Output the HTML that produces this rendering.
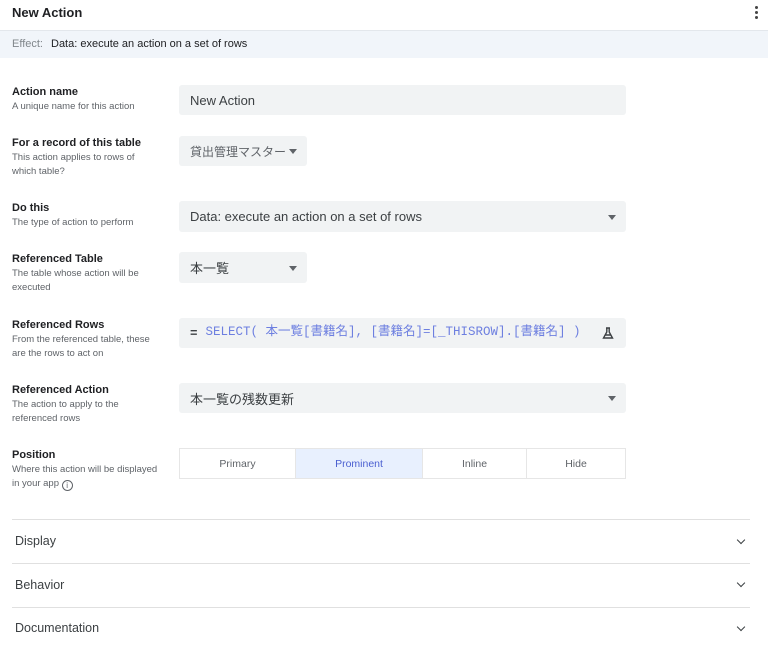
<!DOCTYPE html>
<html><head><meta charset="utf-8"><style>
*{box-sizing:border-box;margin:0;padding:0}
body{width:768px;height:664px;background:#fff;font-family:"Liberation Sans","Noto Sans CJK JP",sans-serif;color:#202124;position:relative;overflow:hidden}
.a{position:absolute}
.lab{position:absolute;left:12px;width:146px}
.t{font-size:11px;font-weight:bold;color:#202124}
.s{font-size:9.5px;color:#5f6368;line-height:14px;margin-top:2px}
.box{position:absolute;background:#f1f3f4;border-radius:3px;font-size:13px;color:#3c4043;padding-left:11px;display:flex;align-items:center;white-space:nowrap}
.dd:after{content:"";position:absolute;right:10px;top:50%;margin-top:-2px;border-left:4px solid transparent;border-right:4px solid transparent;border-top:5px solid #5f6368}
.seg{position:absolute;top:448px;height:31px;border:1px solid #e6e6e6;font-size:10.5px;color:#5f6368;display:flex;align-items:center;justify-content:center}
.hr{position:absolute;left:12px;width:738px;height:1px;background:#e0e0e0}
.sec{position:absolute;left:15px;font-size:12.5px;color:#3c4043}
.chev{position:absolute;left:738px;width:6px;height:6px;border-right:1.5px solid #3c4043;border-bottom:1.5px solid #3c4043;transform:rotate(45deg)}
</style></head><body>
<div class="a" style="left:12px;top:5px;font-size:13px;font-weight:bold">New Action</div>
<div class="a" style="left:755px;top:6px;width:3px;font-size:0">
<div style="width:3px;height:3px;border-radius:50%;background:#444;margin-bottom:2px"></div><div style="width:3px;height:3px;border-radius:50%;background:#444;margin-bottom:2px"></div><div style="width:3px;height:3px;border-radius:50%;background:#444"></div></div>
<div class="a" style="left:0;top:30px;width:768px;height:28px;background:#f1f5fa;border-top:1px solid #e3e7ec"></div>
<div class="a" style="left:12px;top:38px;font-size:11px;color:#80868b">Effect:</div>
<div class="a" style="left:51px;top:38px;font-size:11px;color:#202124">Data: execute an action on a set of rows</div>

<div class="lab" style="top:86px"><div class="t">Action name</div><div class="s">A unique name for this action</div></div>
<div class="box" style="left:179px;top:85px;width:447px;height:30px">New Action</div>

<div class="lab" style="top:137px;width:140px"><div class="t">For a record of this table</div><div class="s">This action applies to rows of which table?</div></div>
<div class="box dd" style="left:179px;top:136px;width:128px;height:30px;color:#5f6368;font-size:12px">貸出管理マスター</div>

<div class="lab" style="top:202px"><div class="t">Do this</div><div class="s">The type of action to perform</div></div>
<div class="box dd" style="left:179px;top:201px;width:447px;height:31px">Data: execute an action on a set of rows</div>

<div class="lab" style="top:253px;width:140px"><div class="t">Referenced Table</div><div class="s">The table whose action will be executed</div></div>
<div class="box dd" style="left:179px;top:252px;width:128px;height:31px">本一覧</div>

<div class="lab" style="top:319px;width:150px"><div class="t">Referenced Rows</div><div class="s">From the referenced table, these are the rows to act on</div></div>
<div class="box" style="left:179px;top:318px;width:447px;height:30px;font-family:'Liberation Mono','Noto Sans CJK JP',monospace;font-size:12.5px;color:#6d7fe0;line-height:16px"><span style="color:#3c4043;margin-right:8px;font-weight:bold;line-height:16px;position:relative;top:1px">=</span><span style="line-height:16px;position:relative;top:-1px">SELECT( 本一覧[書籍名], [書籍名]=[_THISROW].[書籍名] )</span>
<svg class="a" style="left:423px;top:9px" width="12" height="12" viewBox="0 0 12 12"><path d="M4 1h4M4.8 1v4L1.5 11h9L7.2 5V1M3 8h6" fill="none" stroke="#3c4043" stroke-width="1.4"/></svg></div>

<div class="lab" style="top:384px;width:120px"><div class="t">Referenced Action</div><div class="s">The action to apply to the referenced rows</div></div>
<div class="box dd" style="left:179px;top:383px;width:447px;height:30px">本一覧の残数更新</div>

<div class="lab" style="top:449px;width:152px"><div class="t">Position</div><div class="s">Where this action will be displayed in your app <span style="display:inline-block;width:11px;height:11px;border:1px solid #5f6368;border-radius:50%;font-size:8px;text-align:center;line-height:9px;vertical-align:-2px">i</span></div></div>
<div class="seg" style="left:179px;width:117px">Primary</div>
<div class="seg" style="left:295px;width:128px;background:#e8f0fe;color:#4a5fd0">Prominent</div>
<div class="seg" style="left:422px;width:105px">Inline</div>
<div class="seg" style="left:526px;width:100px">Hide</div>

<div class="hr" style="top:519px"></div>
<div class="sec" style="top:534px">Display</div><div class="chev" style="top:537px"></div>
<div class="hr" style="top:563px"></div>
<div class="sec" style="top:578px">Behavior</div><div class="chev" style="top:580px"></div>
<div class="hr" style="top:607px"></div>
<div class="sec" style="top:621px">Documentation</div><div class="chev" style="top:624px"></div>
</body></html>
